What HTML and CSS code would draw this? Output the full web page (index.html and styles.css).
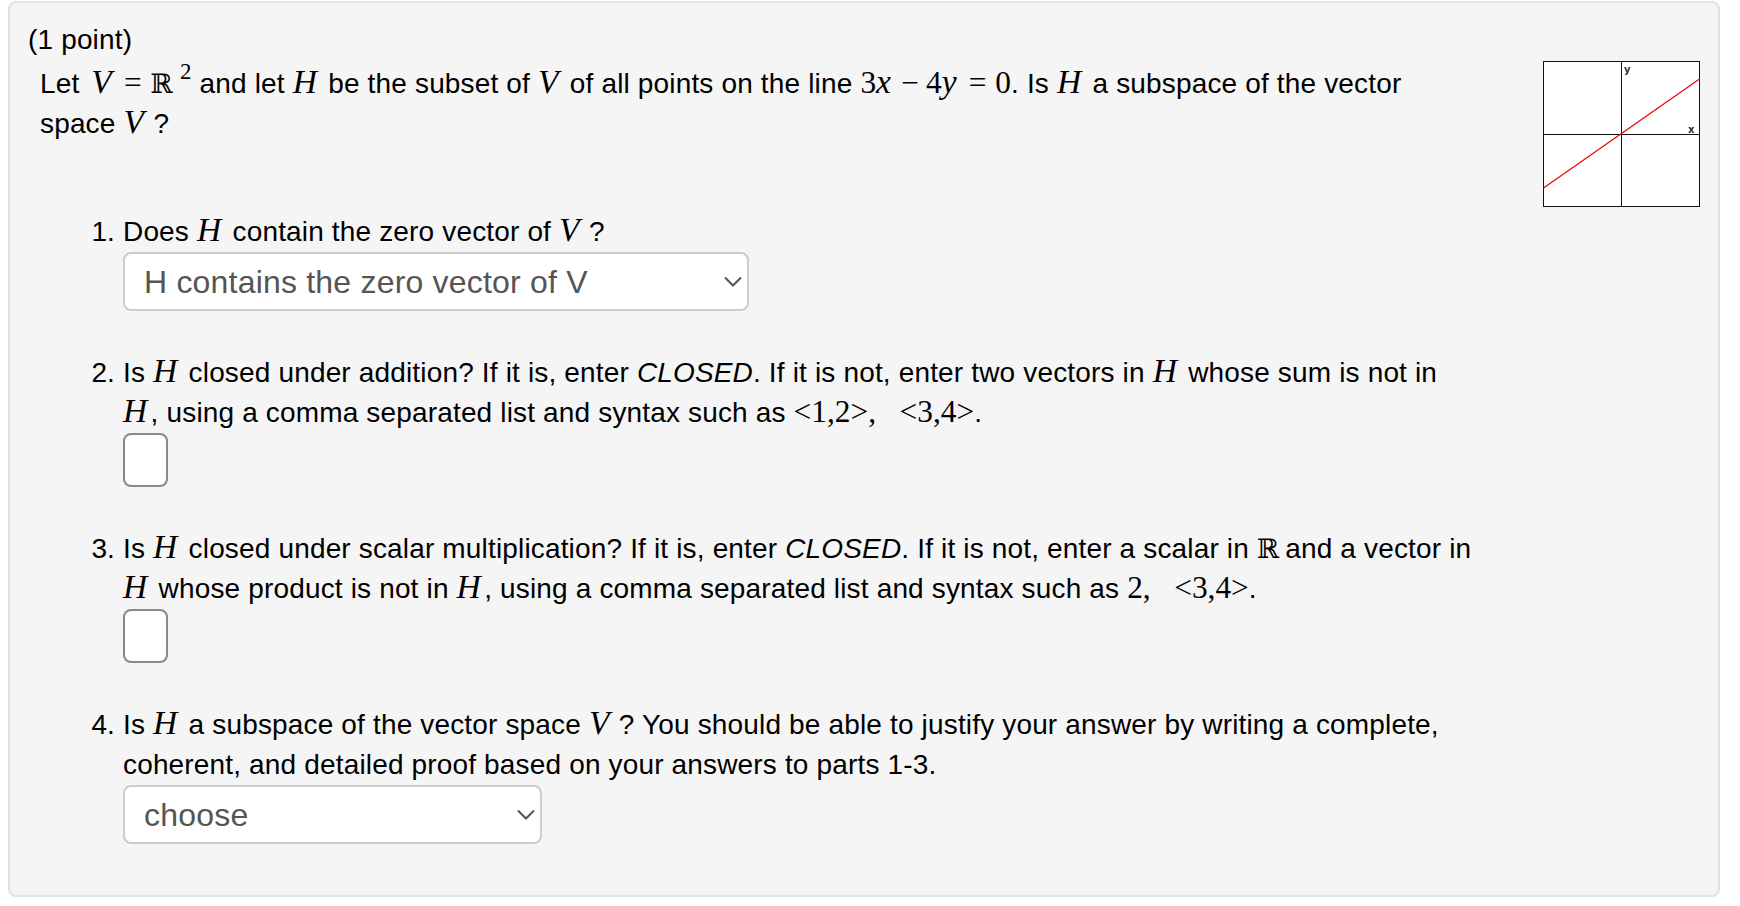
FILE: index.html
```html
<!DOCTYPE html>
<html>
<head>
<meta charset="utf-8">
<title>Subspace problem</title>
<link rel="stylesheet" href="styles.css">
</head>
<body>
<div class="panel">
  <div class="points">(1 point)</div>
  <div class="intro">
    <p class="statement">Let <span class="mi mi-v">V</span><span class="rel">=</span><span class="bb">ℝ</span><sup class="sup">2</sup> and let <span class="mi">H</span> be the subset of <span class="mi">V</span> of all points on the line <span class="mn">3</span><span class="mi">x</span><span class="bin">−</span><span class="mn">4</span><span class="mi">y</span><span class="rel">=</span><span class="mn">0</span>. Is <span class="mi">H</span> a subspace of the vector space <span class="mi mi-q">V</span>?</p>
    <svg class="graph" width="157" height="146" viewBox="0 0 157 146">
      <rect x="0.5" y="0.5" width="156" height="145" fill="#fff" stroke="#111" stroke-width="1"/>
      <line x1="78.5" y1="0" x2="78.5" y2="146" stroke="#111" stroke-width="1"/>
      <line x1="0" y1="73.5" x2="157" y2="73.5" stroke="#111" stroke-width="1"/>
      <line x1="0.5" y1="127" x2="156.5" y2="18" stroke="#e00" stroke-width="1.2"/>
      <text x="81" y="12" class="axis-label">y</text>
      <text x="145" y="72" class="axis-label">x</text>
    </svg>
  </div>
  <ol class="parts">
    <li class="part">
      <div class="q">Does <span class="mi">H</span> contain the zero vector of <span class="mi mi-q">V</span>?</div>
      <div class="sel sel-wide">
        <select class="dropdown"><option>H contains the zero vector of V</option></select>
        <svg class="chev" width="18" height="11" viewBox="0 0 18 11"><path d="M1 1.5 L9 9.5 L17 1.5" fill="none" stroke="#555" stroke-width="2"/></svg>
      </div>
    </li>
    <li class="part">
      <div class="q">Is <span class="mi">H</span> closed under addition? If it is, enter <em>CLOSED</em>. If it is not, enter two vectors in <span class="mi">H</span> whose sum is not in <span class="mi">H</span>, using a comma separated list and syntax such as <span class="mt">&lt;1,2&gt;,<span class="gap"></span>&lt;3,4&gt;</span>.</div>
      <div class="box"></div>
    </li>
    <li class="part">
      <div class="q">Is <span class="mi">H</span> closed under scalar multiplication? If it is, enter <em>CLOSED</em>. If it is not, enter a scalar in <span class="bb">ℝ</span> and a vector in <span class="mi">H</span> whose product is not in <span class="mi">H</span>, using a comma separated list and syntax such as <span class="mt">2,<span class="gap"></span>&lt;3,4&gt;</span>.</div>
      <div class="box"></div>
    </li>
    <li class="part">
      <div class="q">Is <span class="mi">H</span> a subspace of the vector space <span class="mi mi-q">V</span>? You should be able to justify your answer by writing a complete, coherent, and detailed proof based on your answers to parts 1-3.</div>
      <div class="sel sel-narrow">
        <select class="dropdown"><option>choose</option></select>
        <svg class="chev" width="18" height="11" viewBox="0 0 18 11"><path d="M1 1.5 L9 9.5 L17 1.5" fill="none" stroke="#555" stroke-width="2"/></svg>
      </div>
    </li>
  </ol>
</div>
</body>
</html>
```

FILE: styles.css
```css
html, body {
  background: #ffffff;
}
body {
  margin: 0 8px;
  font-family: "Liberation Sans", Arial, Helvetica, sans-serif;
  font-size: 28px;
  line-height: 40px;
  letter-spacing: 0.16px;
  color: #000;
}
.panel {
  box-sizing: border-box;
  width: 1712px;
  margin-top: 1px;
  border: 2px solid #e3e3e3;
  border-radius: 8px;
  background: #f5f5f5;
  padding: 17px 18px 51px 18px;
}
.points {
  height: 40px;
}
.intro {
  display: flex;
  justify-content: space-between;
  align-items: flex-start;
  margin-left: 12px;
  margin-top: 4px;
}
.statement {
  margin: 0;
  width: 1432px;
}
.graph {
  display: block;
  margin-top: -3px;
  flex: none;
}
.axis-label {
  font-family: "DejaVu Sans", sans-serif;
  font-size: 10px;
  font-weight: bold;
  fill: #333;
}
.mi {
  font-family: "Liberation Serif", "Times New Roman", serif;
  font-style: italic;
  font-size: 1.2em;
  line-height: 1;
  letter-spacing: 0;
  padding-right: 0.1em;
}
.mi-v {
  margin-left: 4px;
}
.mi-q {
  padding-right: 0.28em;
}
.mn, .mt {
  font-family: "Liberation Serif", "Times New Roman", serif;
  font-size: 1.12em;
  line-height: 1;
  letter-spacing: 0;
}
.rel {
  font-family: "Liberation Serif", "Times New Roman", serif;
  font-size: 1.12em;
  line-height: 1;
  margin: 0 0.28em;
}
.bin {
  font-family: "Liberation Serif", "Times New Roman", serif;
  font-size: 1.12em;
  line-height: 1;
  margin: 0 0.22em;
}
.gap {
  display: inline-block;
  width: 0.75em;
}
.bb {
  font-family: "DejaVu Serif", serif;
  font-size: 0.96em;
  line-height: 1;
  letter-spacing: -3px;
  margin-right: 1px;
}
.sup {
  font-family: "Liberation Serif", serif;
  font-size: 0.82em;
  line-height: 0;
  vertical-align: 0.62em;
  margin-left: 9px;
}
em {
  font-style: italic;
}
.parts {
  box-sizing: border-box;
  width: 1451px;
  margin: 5px 0 0 0;
  padding-left: 95px;
}
.part {
  margin-bottom: 42px;
}
.part:last-child {
  margin-bottom: 0;
}
.sel {
  position: relative;
  display: block;
  height: 59px;
}
.sel-wide {
  width: 626px;
}
.sel-narrow {
  width: 419px;
}
.dropdown {
  -webkit-appearance: none;
  appearance: none;
  box-sizing: border-box;
  width: 100%;
  height: 59px;
  margin: 0;
  border: 2px solid #cccccc;
  border-radius: 8px;
  background: #ffffff;
  font-family: "Liberation Sans", Arial, Helvetica, sans-serif;
  font-size: 32px;
  letter-spacing: 0.2px;
  color: #555555;
  padding: 0 40px 0 19px;
  outline: none;
}
.chev {
  position: absolute;
  right: 7px;
  top: 24px;
  pointer-events: none;
}
.box {
  box-sizing: border-box;
  width: 45px;
  height: 54px;
  border: 2px solid #888888;
  border-radius: 8px;
  background: #ffffff;
}
```
